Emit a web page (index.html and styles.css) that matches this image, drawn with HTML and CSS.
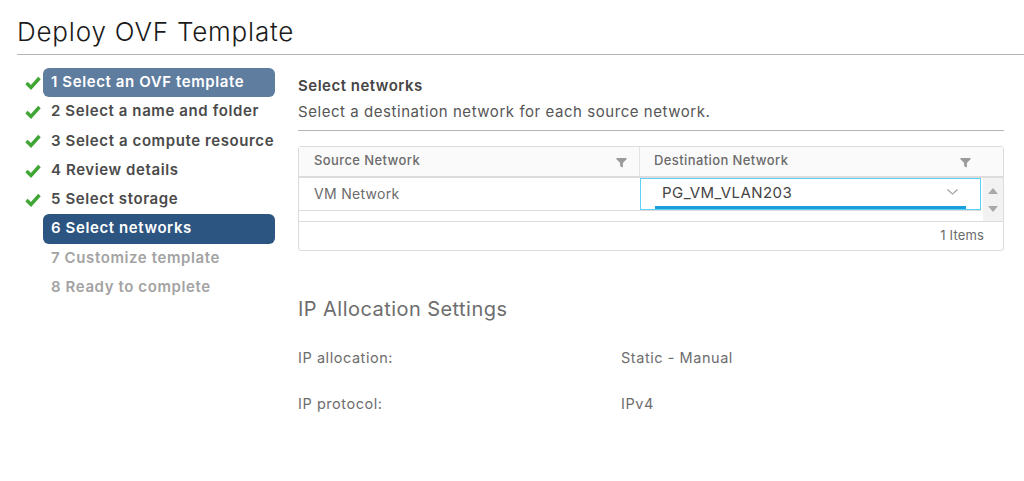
FILE: index.html
```html
<!DOCTYPE html>
<html lang="en">
<head>
<meta charset="utf-8">
<title>Deploy OVF Template</title>
<link rel="stylesheet" href="styles.css">
</head>
<body>
<header class="title-bar"><h1>Deploy OVF Template</h1></header>
<div class="wizard">
  <nav class="steps">
    <div class="step"><svg class="check" viewBox="0 0 16 14"><path d="M1.5 7 L6 11.5 L14.5 2"/></svg><span class="label visited">1 Select an OVF template</span></div>
    <div class="step"><svg class="check" viewBox="0 0 16 14"><path d="M1.5 7 L6 11.5 L14.5 2"/></svg><span class="label">2 Select a name and folder</span></div>
    <div class="step"><svg class="check" viewBox="0 0 16 14"><path d="M1.5 7 L6 11.5 L14.5 2"/></svg><span class="label">3 Select a compute resource</span></div>
    <div class="step"><svg class="check" viewBox="0 0 16 14"><path d="M1.5 7 L6 11.5 L14.5 2"/></svg><span class="label">4 Review details</span></div>
    <div class="step"><svg class="check" viewBox="0 0 16 14"><path d="M1.5 7 L6 11.5 L14.5 2"/></svg><span class="label">5 Select storage</span></div>
    <div class="step"><span class="check"></span><span class="label active">6 Select networks</span></div>
    <div class="step"><span class="check"></span><span class="label disabled">7 Customize template</span></div>
    <div class="step"><span class="check"></span><span class="label disabled">8 Ready to complete</span></div>
  </nav>
  <main class="content">
    <h2 class="page-title">Select networks</h2>
    <p class="page-desc">Select a destination network for each source network.</p>
    <div class="grid">
      <div class="grid-head">
        <div class="head-cell source-col"><span>Source Network</span><svg class="filter" viewBox="0 0 12 12"><path d="M0.5 1 H11.5 V2.5 L7.5 6.5 V11.5 L4.5 10 V6.5 L0.5 2.5 Z"/></svg></div>
        <div class="head-cell dest-col"><span>Destination Network</span><svg class="filter" viewBox="0 0 12 12"><path d="M0.5 1 H11.5 V2.5 L7.5 6.5 V11.5 L4.5 10 V6.5 L0.5 2.5 Z"/></svg></div>
      </div>
      <div class="grid-body">
        <div class="rows">
          <div class="row">
            <div class="cell source-col">VM Network</div>
            <div class="select-cell">
              <div class="select"><span>PG_VM_VLAN203</span><svg class="chevron" viewBox="0 0 12 7"><path d="M0.5 0.5 L6 5.5 L11.5 0.5"/></svg></div>
            </div>
          </div>
        </div>
        <div class="scrollbar">
          <svg viewBox="0 0 10 6"><path d="M5 0 L10 6 H0 Z"/></svg>
          <svg viewBox="0 0 10 6"><path d="M0 0 H10 L5 6 Z"/></svg>
        </div>
      </div>
      <div class="grid-foot">1 Items</div>
    </div>
    <h3 class="section-title">IP Allocation Settings</h3>
    <dl class="props">
      <dt>IP allocation:</dt><dd>Static - Manual</dd>
      <dt>IP protocol:</dt><dd>IPv4</dd>
    </dl>
  </main>
</div>
</body>
</html>
```

FILE: styles.css
```css
* { box-sizing: border-box; }
html, body { margin: 0; padding: 0; }
body {
  width: 1024px;
  height: 481px;
  overflow: hidden;
  background: #fff;
  font-family: Inter, "Liberation Sans", sans-serif;
  color: #565656;
}
.title-bar {
  margin-left: 17px;
  height: 55px;
  border-bottom: 1px solid #b5b5b5;
}
.title-bar h1 {
  margin: 0;
  padding-top: 14px;
  font-size: 26px;
  line-height: 36px;
  font-weight: 300;
  color: #1a1a1a;
  letter-spacing: 0.8px;
}
.wizard { display: flex; }
.steps {
  width: 298px;
  padding: 13px 0 0 25px;
  flex: none;
}
.step {
  display: flex;
  align-items: center;
  height: 29.3px;
}
.check {
  width: 16px;
  height: 14px;
  margin-right: 2px;
  flex: none;
  fill: none;
  stroke: #3fa535;
  stroke-width: 3.4;
}
.label {
  width: 232px;
  height: 29.3px;
  padding-left: 8px;
  border-radius: 6px;
  font-size: 15px;
  line-height: 28.5px;
  font-weight: 600;
  letter-spacing: 0.6px;
  color: #4a4a4a;
}
.label.visited { background: #5f7d9f; color: #fff; }
.label.active { background: #2c5581; color: #fff; }
.label.disabled { color: #a3a3a3; }
.content { width: 706px; padding-top: 21px; }
.page-title {
  margin: 0;
  font-size: 15px;
  line-height: 20px;
  font-weight: 600;
  letter-spacing: 0.5px;
  color: #454545;
}
.page-desc {
  margin: 6px 0 0;
  width: 706px;
  height: 29px;
  font-size: 15px;
  line-height: 20px;
  letter-spacing: 0.55px;
  color: #565656;
  border-bottom: 1px solid #b5b5b5;
}
.grid {
  width: 706px;
  height: 105px;
  margin-top: 15px;
  border: 1px solid #dcdcdc;
  border-radius: 3px;
}
.grid-head {
  display: flex;
  height: 31px;
  background: #fafafa;
  border-bottom: 2px solid #dcdcdc;
}
.head-cell {
  display: flex;
  align-items: center;
  justify-content: space-between;
  padding: 0 12px 3px 15px;
  font-size: 13px;
  font-weight: 500;
  letter-spacing: 0.4px;
  color: #6b6b6b;
}
.source-col { width: 341px; flex: none; border-right: 1px solid #e3e3e3; }
.dest-col { width: 364px; flex: none; padding-left: 14px; padding-right: 33px; }
.filter { width: 11px; height: 11px; fill: #9b9b9b; position: relative; top: 2px; }
.grid-body { display: flex; height: 44px; border-bottom: 1px solid #dcdcdc; }
.rows { flex: 1; }
.row { display: flex; height: 33px; border-bottom: 1px solid #dcdcdc; }
.cell {
  height: 32px;
  padding-left: 15px;
  font-size: 14px;
  line-height: 31px;
  letter-spacing: 0.3px;
  color: #6b6b6b;
  border-right: 0;
}
.select-cell { flex: 1; }
.select {
  display: flex;
  align-items: center;
  justify-content: space-between;
  width: 341px;
  height: 32px;
  padding: 0 22px 4px 21px;
  border: 1px solid #5fd0f5;
  font-size: 15px;
  letter-spacing: 0.45px;
  color: #444;
  position: relative;
}
.select::after {
  content: "";
  position: absolute;
  left: 14px;
  right: 14px;
  bottom: 0;
  height: 3px;
  background: #1a9fdc;
}
.chevron { width: 11px; height: 6.5px; fill: none; stroke: #9a9a9a; stroke-width: 1.2; }
.scrollbar {
  width: 20px;
  flex: none;
  margin-left: 2px;
  background: #f2f2f2;
  display: flex;
  flex-direction: column;
  align-items: center;
  justify-content: space-between;
  padding: 10px 0 9px;
}
.scrollbar svg { width: 10px; height: 6px; fill: #a8a8a8; }
.grid-foot {
  height: 27px;
  padding-right: 19px;
  text-align: right;
  font-size: 13px;
  line-height: 27px;
  letter-spacing: 0.15px;
  color: #6b6b6b;
}
.section-title {
  margin: 46px 0 0;
  font-size: 20px;
  line-height: 24px;
  font-weight: 400;
  letter-spacing: 0.45px;
  color: #6d6d6d;
}
.props {
  display: grid;
  grid-template-columns: 323px 1fr;
  grid-auto-rows: 46px;
  margin: 26px 0 0;
  font-size: 14.5px;
  line-height: 22px;
  letter-spacing: 0.55px;
  color: #6d6d6d;
}
.props dd { margin: 0; }
```
